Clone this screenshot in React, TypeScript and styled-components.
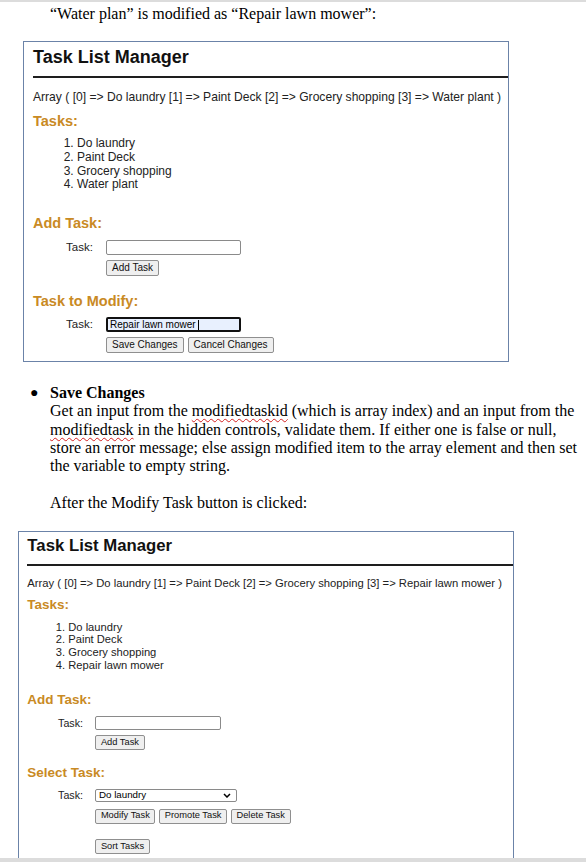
import styled, { createGlobalStyle } from 'styled-components';

const GlobalStyle = createGlobalStyle`
  html, body {
    margin: 0;
    padding: 0;
    background: #dcdcdc;
  }
  body {
    width: 586px;
    height: 862px;
    overflow: hidden;
  }
`;

const Sheet = styled.div`
  margin-top: 2px;
  height: 856px;
  padding-top: 3px;
  box-sizing: border-box;
  background: #fff;
  overflow: hidden;
  font-family: 'Liberation Serif', 'Times New Roman', serif;
  font-size: 16px;
  line-height: 18.3px;
  color: #000;
`;

const DocLine = styled.p<{ $top?: number }>`
  margin: ${(p) => p.$top ?? 0}px 0 0 0;
  padding-left: 50px;
  white-space: nowrap;
`;

const Bullet = styled.div<{ $top: number }>`
  display: grid;
  grid-template-columns: 20px 1fr;
  margin-top: ${(p) => p.$top}px;
  padding-left: 30px;
  white-space: nowrap;
`;

const Dot = styled.span`
  font-size: 14px;
`;

const BulletTitle = styled.div`
  font-weight: bold;
`;

const Misspelled = styled.span`
  text-decoration: underline wavy #d42020;
  text-decoration-thickness: 1px;
  text-underline-offset: 2px;
`;

const Panel = styled.section<{ $s: number; $w: number; $left: number; $top: number }>`
  --s: ${(p) => p.$s};
  box-sizing: border-box;
  width: ${(p) => p.$w}px;
  margin: ${(p) => p.$top}px 0 0 ${(p) => p.$left}px;
  border: 1px solid #6b83a8;
  padding: calc(4px * var(--s)) 0 calc(8px * var(--s)) calc(9px * var(--s));
  font-family: 'Liberation Sans', Arial, sans-serif;
  color: #222;
  background: #fff;
`;

const PanelTitle = styled.h1`
  margin: 0;
  font-size: calc(18px * var(--s));
  line-height: calc(22px * var(--s));
  font-weight: bold;
  color: #111;
  padding-bottom: calc(8px * var(--s));
  border-bottom: 2px solid #1e1e1e;
`;

const ArrayDump = styled.div`
  margin-top: calc(12px * var(--s));
  font-size: calc(12.1px * var(--s));
  line-height: calc(14px * var(--s));
  white-space: nowrap;
`;

const SectionTitle = styled.h2<{ $gap: number }>`
  margin: calc(${(p) => p.$gap}px * var(--s)) 0 0 0;
  font-size: calc(14.5px * var(--s));
  line-height: calc(18px * var(--s));
  font-weight: bold;
  color: #c98a24;
`;

const TaskList = styled.ol`
  margin: calc(7px * var(--s)) 0 0 0;
  padding-left: calc(44px * var(--s));
  font-size: calc(12px * var(--s));
  line-height: calc(13.7px * var(--s));
`;

const FormRow = styled.div<{ $gap: number }>`
  display: grid;
  grid-template-columns: calc(40px * var(--s)) auto;
  justify-content: start;
  align-items: center;
  height: calc(15px * var(--s));
  margin-top: calc(${(p) => p.$gap}px * var(--s));
  padding-left: calc(33px * var(--s));
`;

const FieldLabel = styled.label`
  font-size: calc(11.5px * var(--s));
  line-height: 1;
  color: #222;
`;

const TextBox = styled.div<{ $focused?: boolean }>`
  box-sizing: border-box;
  display: flex;
  align-items: center;
  width: calc(135px * var(--s));
  height: calc(15px * var(--s));
  padding: 0 calc(2px * var(--s));
  border: ${(p) => (p.$focused ? '2px solid #111' : '1px solid #8a8a8a')};
  border-radius: 2px;
  background: ${(p) => (p.$focused ? '#e8f0fe' : '#fff')};
  font-size: calc(10px * var(--s));
  line-height: 1;
  color: #000;
`;

const Caret = styled.span`
  display: inline-block;
  width: 1px;
  height: calc(10px * var(--s));
  margin-left: 2px;
  background: #000;
`;

const SelectBox = styled.div`
  box-sizing: border-box;
  display: flex;
  align-items: center;
  justify-content: space-between;
  width: calc(152px * var(--s));
  height: calc(14px * var(--s));
  padding: 0 calc(5px * var(--s)) 0 calc(3px * var(--s));
  border: 1px solid #8a8a8a;
  border-radius: 2px;
  font-size: calc(10.5px * var(--s));
  line-height: 1;
  color: #000;
`;

const ButtonRow = styled.div<{ $gap: number }>`
  display: flex;
  gap: calc(4px * var(--s));
  height: calc(16px * var(--s));
  margin-top: calc(${(p) => p.$gap}px * var(--s));
  padding-left: calc(73px * var(--s));
`;

const Button = styled.button`
  box-sizing: border-box;
  height: calc(16px * var(--s));
  padding: 0 calc(5px * var(--s));
  border: 1px solid #8f8f8f;
  border-radius: 2px;
  background: #efefef;
  font-family: 'Liberation Sans', Arial, sans-serif;
  font-size: calc(10px * var(--s));
  line-height: 1;
  color: #111;
`;

const Chevron = () => (
  <svg width="8" height="5" viewBox="0 0 8 5">
    <path d="M1 1 L4 4 L7 1" fill="none" stroke="#000" strokeWidth="1.5" />
  </svg>
);

type PanelProps = {
  tasks: string[];
  s: number;
  w: number;
  left: number;
  top: number;
  children: React.ReactNode;
};

function TaskPanel({ tasks, s, w, left, top, children }: PanelProps) {
  const dump = tasks.map((t, i) => `[${i}] => ${t}`).join(' ');
  return (
    <Panel $s={s} $w={w} $left={left} $top={top}>
      <PanelTitle>Task List Manager</PanelTitle>
      <ArrayDump>Array ( {dump} )</ArrayDump>
      <SectionTitle $gap={8}>Tasks:</SectionTitle>
      <TaskList>
        {tasks.map((t) => (
          <li key={t}>{t}</li>
        ))}
      </TaskList>
      <SectionTitle $gap={22}>Add Task:</SectionTitle>
      <FormRow $gap={8}>
        <FieldLabel>Task:</FieldLabel>
        <TextBox />
      </FormRow>
      <ButtonRow $gap={5}>
        <Button>Add Task</Button>
      </ButtonRow>
      {children}
    </Panel>
  );
}

export default function App() {
  return (
    <>
      <GlobalStyle />
      <Sheet>
        <DocLine>“Water plan” is modified as “Repair lawn mower”:</DocLine>

        <TaskPanel
          tasks={['Do laundry', 'Paint Deck', 'Grocery shopping', 'Water plant']}
          s={1}
          w={486}
          left={23}
          top={18}
        >
          <SectionTitle $gap={16}>Task to Modify:</SectionTitle>
          <FormRow $gap={7}>
            <FieldLabel>Task:</FieldLabel>
            <TextBox $focused>
              Repair lawn mower
              <Caret />
            </TextBox>
          </FormRow>
          <ButtonRow $gap={5}>
            <Button>Save Changes</Button>
            <Button>Cancel Changes</Button>
          </ButtonRow>
        </TaskPanel>

        <Bullet $top={22}>
          <Dot>●</Dot>
          <div>
            <BulletTitle>Save Changes</BulletTitle>
            <div>
              Get an input from the <Misspelled>modifiedtaskid</Misspelled> (which is array index) and an
              input from the
            </div>
            <div>
              <Misspelled>modifiedtask</Misspelled> in the hidden controls, validate them. If either one is
              false or null,
            </div>
            <div>store an error message; else assign modified item to the array element and then set</div>
            <div>the variable to empty string.</div>
          </div>
        </Bullet>

        <DocLine $top={18.3}>After the Modify Task button is clicked:</DocLine>

        <TaskPanel
          tasks={['Do laundry', 'Paint Deck', 'Grocery shopping', 'Repair lawn mower']}
          s={0.93}
          w={496}
          left={18}
          top={19}
        >
          <SectionTitle $gap={16}>Select Task:</SectionTitle>
          <FormRow $gap={7.5}>
            <FieldLabel>Task:</FieldLabel>
            <SelectBox>
              Do laundry
              <Chevron />
            </SelectBox>
          </FormRow>
          <ButtonRow $gap={7}>
            <Button>Modify Task</Button>
            <Button>Promote Task</Button>
            <Button>Delete Task</Button>
          </ButtonRow>
          <ButtonRow $gap={16.5}>
            <Button>Sort Tasks</Button>
          </ButtonRow>
        </TaskPanel>
      </Sheet>
    </>
  );
}
